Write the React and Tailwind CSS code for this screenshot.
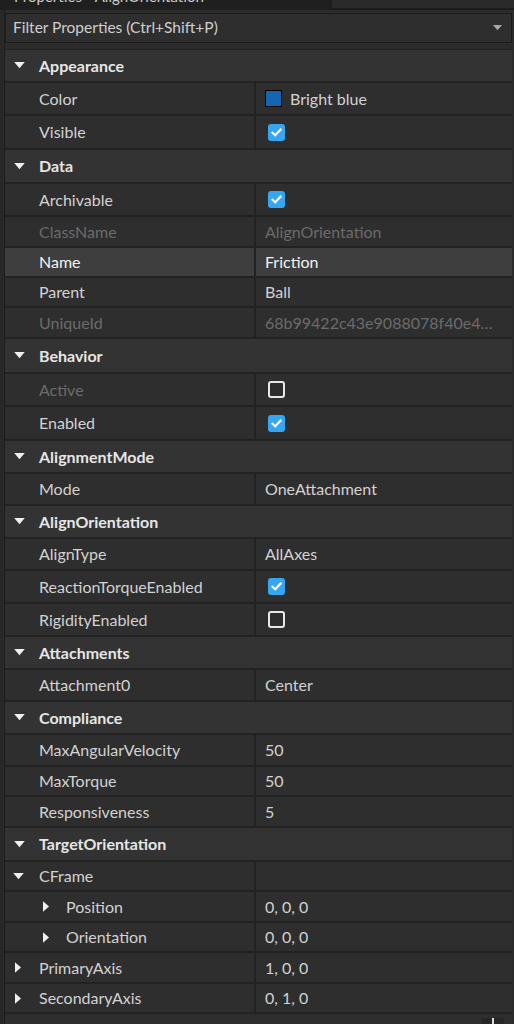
import React from 'react';

const H = {
  30: 'h-[30px]',
  31: 'h-[31px]',
  32: 'h-[32px]',
  33: 'h-[33px]',
  34: 'h-[34px]',
  35: 'h-[35px]',
};

// kind: header | prop ; value: check | uncheck | color
const rows = [
  { kind: 'header', label: 'Appearance', h: 33 },
  { label: 'Color', value: 'color', text: 'Bright blue', h: 33 },
  { label: 'Visible', value: 'check', h: 34 },
  { kind: 'header', label: 'Data', h: 34 },
  { label: 'Archivable', value: 'check', h: 33 },
  { label: 'ClassName', text: 'AlignOrientation', disabled: true, h: 31 },
  { label: 'Name', text: 'Friction', selected: true, h: 30 },
  { label: 'Parent', text: 'Ball', h: 30 },
  { label: 'UniqueId', text: '68b99422c43e9088078f40e4000000000000', disabled: true, h: 31 },
  { kind: 'header', label: 'Behavior', h: 35 },
  { label: 'Active', value: 'uncheck', disabled: true, h: 33 },
  { label: 'Enabled', value: 'check', h: 34 },
  { kind: 'header', label: 'AlignmentMode', h: 33 },
  { label: 'Mode', text: 'OneAttachment', h: 32 },
  { kind: 'header', label: 'AlignOrientation', h: 33 },
  { label: 'AlignType', text: 'AllAxes', h: 32 },
  { label: 'ReactionTorqueEnabled', value: 'check', h: 33 },
  { label: 'RigidityEnabled', value: 'uncheck', h: 33 },
  { kind: 'header', label: 'Attachments', h: 33 },
  { label: 'Attachment0', text: 'Center', h: 32 },
  { kind: 'header', label: 'Compliance', h: 33 },
  { label: 'MaxAngularVelocity', text: '50', h: 32 },
  { label: 'MaxTorque', text: '50', h: 30 },
  { label: 'Responsiveness', text: '5', h: 31 },
  { kind: 'header', label: 'TargetOrientation', h: 34 },
  { label: 'CFrame', text: '', expander: 'down', h: 30 },
  { label: 'Position', text: '0, 0, 0', expander: 'right', indent: true, h: 31 },
  { label: 'Orientation', text: '0, 0, 0', expander: 'right', indent: true, h: 30 },
  { label: 'PrimaryAxis', text: '1, 0, 0', expander: 'right', h: 31 },
  { label: 'SecondaryAxis', text: '0, 1, 0', expander: 'right', h: 30 },
];

const DownTri = ({ className }) => (
  <svg viewBox="0 0 12 8" className={className}>
    <polygon points="0,0 12,0 6,7" fill="currentColor" />
  </svg>
);

const RightTri = ({ className }) => (
  <svg viewBox="0 0 7 12" className={className}>
    <polygon points="0,0 7,6 0,12" fill="currentColor" />
  </svg>
);

const Check = () => (
  <div className="w-[17px] h-[17px] rounded-[3px] bg-[#35a7f2] flex items-center justify-center">
    <svg viewBox="0 0 12 10" className="w-[11px] h-[9px]">
      <path d="M1.5 5.2 L4.6 8 L10.5 1.8" stroke="white" strokeWidth="2.4" fill="none" strokeLinecap="square" />
    </svg>
  </div>
);

const Uncheck = () => (
  <div className="w-[17px] h-[17px] rounded-[3px] border-2 border-[#e8e8e8]" />
);

const Row = ({ r }) => {
  if (r.kind === 'header') {
    return (
      <div className={`${H[r.h]} flex items-center bg-[#333333] border-b-2 border-[#222222]`}>
        <DownTri className="w-[11px] h-[7px] ml-[9px] text-[#f0f0f0]" />
        <span className="ml-[14px] text-[16px] font-bold text-[#e6e6e6]">{r.label}</span>
      </div>
    );
  }

  const labelColor = r.disabled ? 'text-[#6b6b6b]' : r.selected ? 'text-[#f2f2f2]' : 'text-[#d2d2d2]';
  const bg = r.selected ? 'bg-[#3e3e3e]' : 'bg-[#2e2e2e]';

  return (
    <div className={`${H[r.h]} flex border-b-2 border-[#222222] ${bg}`}>
      <div className="w-[251px] shrink-0 flex items-center border-r-2 border-[#222222]">
        {r.expander === 'down' && <DownTri className="w-[11px] h-[7px] ml-[8px] text-[#f0f0f0]" />}
        {r.expander === 'right' && r.indent && <RightTri className="w-[6px] h-[11px] ml-[38px] text-[#f0f0f0]" />}
        {r.expander === 'right' && !r.indent && <RightTri className="w-[6px] h-[11px] ml-[10px] text-[#f0f0f0]" />}
        <span
          className={`text-[16px] ${labelColor} ${
            r.expander === 'down' ? 'ml-[15px]' : r.expander === 'right' ? (r.indent ? 'ml-[17px]' : 'ml-[18px]') : 'ml-[34px]'
          }`}
        >
          {r.label}
        </span>
      </div>
      <div className="flex-1 min-w-0 flex items-center pl-[9px] pr-[12px]">
        {r.value === 'check' && <div className="ml-[3px]"><Check /></div>}
        {r.value === 'uncheck' && <div className="ml-[3px]"><Uncheck /></div>}
        {r.value === 'color' && (
          <div className="w-[17px] h-[17px] shrink-0 border border-black bg-[#1565b4] mr-[8px]" />
        )}
        {r.text !== undefined && (
          <span className={`min-w-0 block text-[16px] truncate ${labelColor}`}>{r.text}</span>
        )}
      </div>
    </div>
  );
};

export default function App() {
  return (
    <div className="w-[514px] h-[1024px] overflow-hidden bg-[#2b2b2b] font-['Lato',sans-serif] flex flex-col">
      {/* Tab strip */}
      <div className="h-[10px] flex shrink-0">
        <div className="w-[332px] bg-[#1f1f1f] overflow-hidden">
          <div className="-mt-[14px] pl-[14px] text-[15px] text-[#cccccc] leading-[20px]">Properties - AlignOrientation</div>
        </div>
        <div className="flex-1 bg-[#2a2a2a] border-b-2 border-[#1c1c1c]" />
      </div>

      <div className="flex-1 flex min-h-0">
        {/* Left edge */}
        <div className="w-[5px] shrink-0 bg-[#282828] border-r border-[#1e1e1e]" />

        <div className="flex-1 min-w-0 flex flex-col pt-[3px] pr-[2px]">
          {/* Filter bar */}
          <div className="h-[30px] shrink-0 flex items-center bg-[#2e2e2e] border border-[#1c1c1c] pl-[7px] pr-[9px]">
            <span className="flex-1 text-[15.5px] text-[#cfcfcf]">Filter Properties (Ctrl+Shift+P)</span>
            <DownTri className="w-[9px] h-[6px] text-[#a8a8a8]" />
          </div>

          {/* Property grid */}
          <div className="mt-[6px] flex flex-col border-t border-[#222222]">
            {rows.map((r, i) => (
              <Row key={i} r={r} />
            ))}
            <div className="h-[14px] bg-[#2e2e2e] flex justify-end pr-[8px]">
              <div className="w-[22px] h-[10px] mt-[4px] bg-[#262626] flex justify-center">
                <div className="w-[2px] h-[6px] bg-[#dddddd]" />
              </div>
            </div>
          </div>
        </div>
      </div>
    </div>
  );
}
